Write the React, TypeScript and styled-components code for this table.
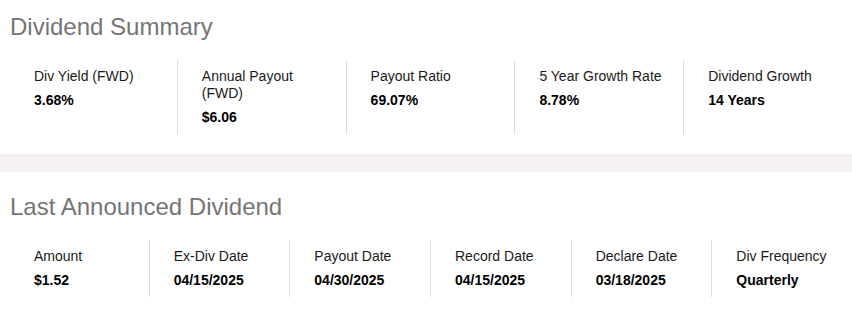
import React from 'react'
import styled, { createGlobalStyle } from 'styled-components'

const GlobalStyle = createGlobalStyle`
  body {
    margin: 0;
    background: #fff;
    font-family: 'Liberation Sans', Arial, sans-serif;
  }
`

const Section = styled.section<{ $top: number }>`
  padding: ${({ $top }) => $top}px 0 20px 0;
`

const Title = styled.h2`
  margin: 0 0 19px 0;
  padding-left: 10px;
  font-size: 24px;
  line-height: 28px;
  font-weight: 400;
  color: #757575;
`

const StatRow = styled.div<{ $cols: number }>`
  display: grid;
  grid-template-columns: repeat(${({ $cols }) => $cols}, 1fr);
  margin-left: 8px;
`

const Stat = styled.div`
  padding: 8px 16px 8px 25px;
  border-left: 1px solid transparent;

  & + & {
    padding-left: 24px;
    border-left-color: #dcdcdc;
  }
`

const Label = styled.div`
  font-size: 14px;
  line-height: 17px;
  color: #1a1a1a;
`

const Value = styled.div`
  margin-top: 7px;
  font-size: 14px;
  line-height: 17px;
  font-weight: 700;
  color: #000;
`

const Band = styled.div`
  height: 18px;
  background: #f4f1f0;
`

const summary = [
  { label: 'Div Yield (FWD)', value: '3.68%' },
  { label: 'Annual Payout (FWD)', value: '$6.06' },
  { label: 'Payout Ratio', value: '69.07%' },
  { label: '5 Year Growth Rate', value: '8.78%' },
  { label: 'Dividend Growth', value: '14 Years' },
]

const announced = [
  { label: 'Amount', value: '$1.52' },
  { label: 'Ex-Div Date', value: '04/15/2025' },
  { label: 'Payout Date', value: '04/30/2025' },
  { label: 'Record Date', value: '04/15/2025' },
  { label: 'Declare Date', value: '03/18/2025' },
  { label: 'Div Frequency', value: 'Quarterly' },
]

type Item = { label: string; value: string }

const Stats = ({ items }: { items: Item[] }) => (
  <StatRow $cols={items.length}>
    {items.map((it) => (
      <Stat key={it.label}>
        <Label>{it.label}</Label>
        <Value>{it.value}</Value>
      </Stat>
    ))}
  </StatRow>
)

export default function App() {
  return (
    <>
      <GlobalStyle />
      <Section $top={13}>
        <Title>Dividend Summary</Title>
        <Stats items={summary} />
      </Section>
      <Band />
      <Section $top={21}>
        <Title>Last Announced Dividend</Title>
        <Stats items={announced} />
      </Section>
    </>
  )
}
